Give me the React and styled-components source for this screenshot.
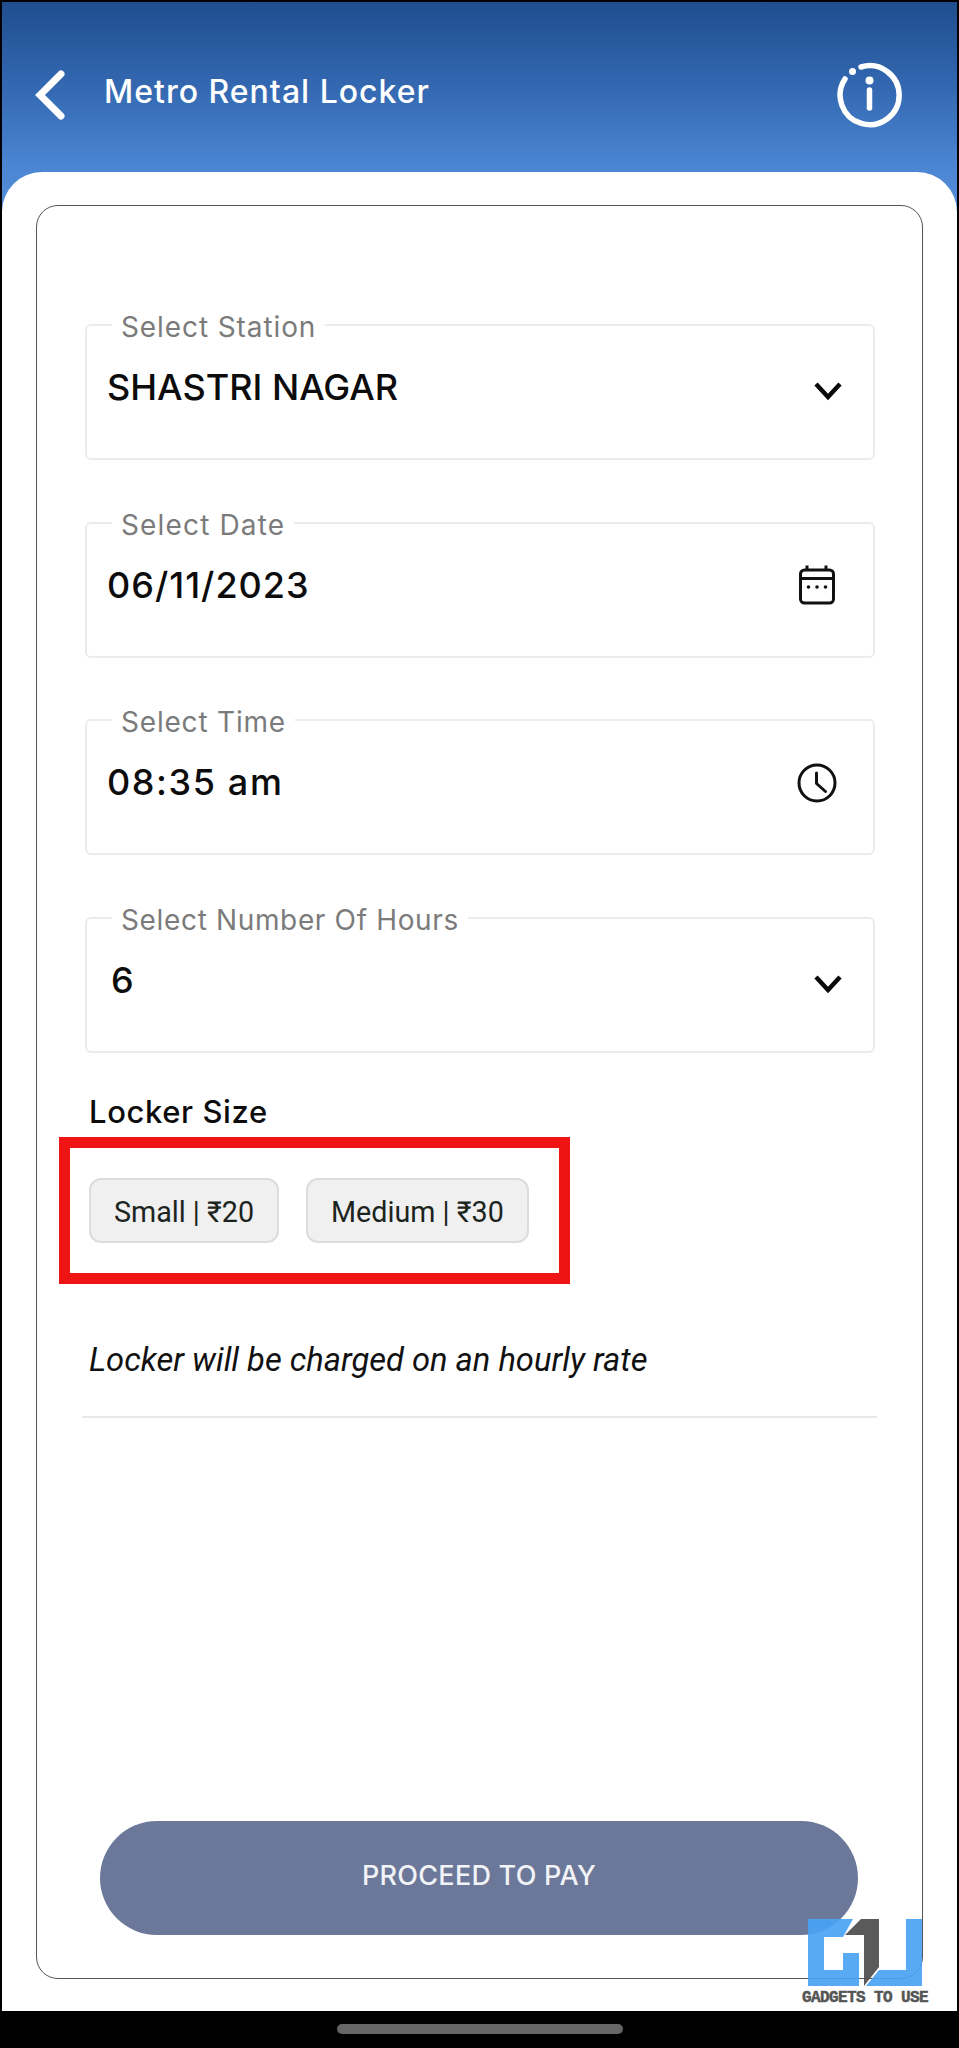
import styled, { createGlobalStyle } from 'styled-components';

const GlobalStyle = createGlobalStyle`
  html, body {
    margin: 0;
    padding: 0;
    background: #000;
  }
  * {
    box-sizing: border-box;
  }
`;

const Screen = styled.div`
  position: relative;
  width: 959px;
  height: 2048px;
  display: flex;
  flex-direction: column;
  background: #000;
  font-family: Inter, "Liberation Sans", sans-serif;
`;

const Main = styled.main`
  flex: 1;
  margin: 2px 2px 0;
  display: flex;
  flex-direction: column;
  min-height: 0;
  background: linear-gradient(180deg, #1f4e8f 0, #2f63ab 70px, #4d87d4 170px, #5590dc 215px) no-repeat;
  background-size: 100% 215px;
`;

const Header = styled.header`
  height: 170px;
  display: flex;
  align-items: center;
  padding: 15px 52px 0 32px;
  flex-shrink: 0;
`;

const Title = styled.h1`
  margin: -6px 0 0 38px;
  flex: 1;
  color: #fff;
  font-size: 32px;
  font-weight: 500;
  letter-spacing: 1px;
`;

const HeaderIcon = styled.svg`
  display: block;
  flex-shrink: 0;
`;

const Panel = styled.section`
  flex: 1;
  display: flex;
  min-height: 0;
  background: #fff;
  border-radius: 40px 40px 0 0;
  padding: 33px 34px 32px;
`;

const Card = styled.div`
  flex: 1;
  display: flex;
  flex-direction: column;
  border: 1px solid #555;
  border-radius: 22px;
  padding-top: 118px;
`;

const Fields = styled.div`
  display: flex;
  flex-direction: column;
  gap: 61.67px;
  padding: 0 47px 0 48px;
`;

const Field = styled.div`
  position: relative;
  height: 136px;
  display: flex;
  justify-content: space-between;
  align-items: flex-start;
  border: 2px solid #ececec;
  border-radius: 6px;
  padding: 37px 30px 0 20px;
`;

const FieldLabel = styled.label`
  position: absolute;
  top: -17px;
  left: 25px;
  padding: 0 9px;
  background: #fff;
  color: #7b7b7b;
  font-size: 28px;
  letter-spacing: ${p => p.$spacing}px;
  line-height: 36px;
`;

const FieldValue = styled.div`
  color: #0c0c0c;
  font-size: 36px;
  font-weight: 500;
  line-height: 48px;
  letter-spacing: ${p => p.$spacing || 0}px;
  padding-left: ${p => p.$indent || 0}px;
`;

const FieldIcon = styled.svg`
  display: block;
  margin-top: ${p => p.$top}px;
  margin-right: ${p => p.$right || 0}px;
`;

const SectionTitle = styled.h2`
  margin: 39px 0 0 52px;
  color: #0c0c0c;
  font-size: 31px;
  font-weight: 500;
  letter-spacing: 0.6px;
  line-height: 40px;
`;

const Highlight = styled.div`
  width: 511px;
  height: 147px;
  margin: 5px 0 0 22px;
  padding-left: 19px;
  display: flex;
  align-items: center;
  gap: 27px;
  border: 11px solid #ee1414;
`;

const Chip = styled.button`
  height: 65px;
  padding: 3px 23px 0;
  border: 2px solid #dcdcdc;
  border-radius: 12px;
  background: #f0f0f0;
  color: #1c2420;
  font-family: Roboto, "Liberation Sans", sans-serif;
  font-size: 28.7px;
`;

const Note = styled.p`
  margin: 56px 0 0 52px;
  color: #111;
  font-family: Roboto, "Liberation Sans", sans-serif;
  font-size: 32.7px;
  font-style: italic;
  line-height: 40px;
`;

const Divider = styled.hr`
  margin: 36px 45px 0;
  height: 2px;
  border: none;
  background: #e8e8e8;
`;

const PayButton = styled.button`
  margin: auto 64px 43px 63px;
  height: 114px;
  padding-bottom: 6px;
  border: none;
  border-radius: 57px;
  background: #6b7899;
  color: #f2f3f7;
  font-family: Inter, "Liberation Sans", sans-serif;
  font-size: 27px;
  font-weight: 500;
  letter-spacing: 0.25px;
`;

const NavBar = styled.div`
  height: 37px;
  flex-shrink: 0;
  display: flex;
  justify-content: center;
  padding-top: 13px;
`;

const NavHandle = styled.div`
  width: 286px;
  height: 10px;
  border-radius: 5px;
  background: #666;
`;

const Watermark = styled.div`
  position: absolute;
  left: 802px;
  top: 1919px;
  width: 126px;
  display: flex;
  flex-direction: column;
  align-items: center;
`;

const WatermarkLogo = styled.svg`
  display: block;
  opacity: 0.92;
`;

const WatermarkText = styled.div`
  margin-top: 3px;
  color: #555;
  font-family: "Liberation Mono", monospace;
  font-size: 16px;
  font-weight: 700;
  line-height: 18px;
  letter-spacing: -0.6px;
  white-space: nowrap;
  -webkit-text-stroke: 0.5px #555;
`;

const Chevron = () => (
  <FieldIcon $top={18} width="30" height="20" viewBox="0 0 30 20" fill="none">
    <path d="M3 3l12 13L27 3" stroke="#0a0a0a" strokeWidth="4.5" />
  </FieldIcon>
);

const Calendar = () => (
  <FieldIcon $top={3} $right={7} width="38" height="41" viewBox="0 0 38 41" fill="none" stroke="#111" strokeWidth="3">
    <rect x="2.5" y="6" width="33" height="33" rx="4" />
    <path d="M2.5 14.5h33M9 1.5V6M28 1.5V6" />
    <circle cx="10.5" cy="23" r="1.8" fill="#111" stroke="none" />
    <circle cx="19" cy="23" r="1.8" fill="#111" stroke="none" />
    <circle cx="27.5" cy="23" r="1.8" fill="#111" stroke="none" />
  </FieldIcon>
);

const Clock = () => (
  <FieldIcon $top={5} $right={6} width="40" height="40" viewBox="0 0 40 40" fill="none" stroke="#111" strokeWidth="3">
    <circle cx="20" cy="20" r="18" />
    <path d="M19.5 10v10.5l9 8" strokeLinecap="round" strokeLinejoin="round" />
  </FieldIcon>
);

const fields = [
  { label: 'Select Station', labelSpacing: 0.9, value: 'SHASTRI NAGAR', icon: <Chevron /> },
  { label: 'Select Date', labelSpacing: 1.15, value: '06/11/2023', spacing: 1, icon: <Calendar /> },
  { label: 'Select Time', labelSpacing: 0.8, value: '08:35 am', spacing: 1.6, icon: <Clock /> },
  { label: 'Select Number Of Hours', labelSpacing: 0.65, value: '6', indent: 4, icon: <Chevron /> },
];

export default function App() {
  return (
    <>
      <GlobalStyle />
      <Screen>
        <Main>
          <Header>
            <HeaderIcon width="32" height="50" viewBox="0 0 32 50" fill="none">
              <path d="M27 4L6 25l21 21" stroke="#fff" strokeWidth="7" strokeLinecap="round" />
            </HeaderIcon>
            <Title>Metro Rental Locker</Title>
            <HeaderIcon width="70" height="70" viewBox="0 0 70 70" fill="none" stroke="#fff">
              <path d="M26 7A29.5 29.5 0 1 1 10 19" strokeWidth="5.5" strokeLinecap="round" />
              <circle cx="17.5" cy="11.5" r="3.5" fill="#fff" stroke="none" />
              <circle cx="34.5" cy="20.5" r="4" fill="#fff" stroke="none" />
              <path d="M34.5 30v18" strokeWidth="5.5" strokeLinecap="round" />
            </HeaderIcon>
          </Header>
          <Panel>
            <Card>
              <Fields>
                {fields.map(f => (
                  <Field key={f.label}>
                    <FieldLabel $spacing={f.labelSpacing}>{f.label}</FieldLabel>
                    <FieldValue $indent={f.indent} $spacing={f.spacing}>{f.value}</FieldValue>
                    {f.icon}
                  </Field>
                ))}
              </Fields>
              <SectionTitle>Locker Size</SectionTitle>
              <Highlight>
                <Chip>Small | ₹20</Chip>
                <Chip>Medium | ₹30</Chip>
              </Highlight>
              <Note>Locker will be charged on an hourly rate</Note>
              <Divider />
              <PayButton>PROCEED TO PAY</PayButton>
            </Card>
          </Panel>
        </Main>
        <NavBar>
          <NavHandle />
        </NavBar>
        <Watermark>
          <WatermarkLogo width="114" height="67" viewBox="0 0 114 67">
            <path fill="#4aa3f5" d="M0 0h45L35 18H16v33h19V34h16v33H0z" />
            <path fill="#4aa3f5" d="M98 0h16v67H58l13-16h27z" />
            <path fill="#4d4d4d" d="M37 16L53 0h18v48L56 67V16z" />
          </WatermarkLogo>
          <WatermarkText>GADGETS TO USE</WatermarkText>
        </Watermark>
      </Screen>
    </>
  );
}
